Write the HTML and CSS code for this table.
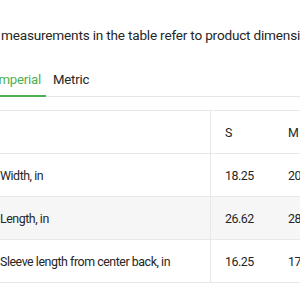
FILE: index.html
```html
<!DOCTYPE html>
<html lang="en">
<head>
<meta charset="utf-8">
<title>Size chart</title>
<link rel="stylesheet" href="styles.css">
</head>
<body>
<div class="page">
  <p class="intro">All measurements in the table refer to product dimensions.</p>
  <div class="tabs">
    <div class="tab active">Imperial</div>
    <div class="tab">Metric</div>
  </div>
  <table class="sizes">
    <thead>
      <tr><th class="label"></th><th>S</th><th>M</th><th>L</th><th>XL</th></tr>
    </thead>
    <tbody>
      <tr><td class="label">Width, in</td><td>18.25</td><td>20.25</td><td>22.25</td><td>24.25</td></tr>
      <tr class="alt"><td class="label">Length, in</td><td>26.62</td><td>28.12</td><td>29.62</td><td>31.12</td></tr>
      <tr><td class="label">Sleeve length from center back, in</td><td>16.25</td><td>17.50</td><td>18.75</td><td>20.00</td></tr>
    </tbody>
  </table>
</div>
</body>
</html>
```
FILE: styles.css
```css
html, body {
  margin: 0;
  padding: 0;
  overflow: hidden;
  background: #fff;
}
body {
  font-family: Roboto, "Liberation Sans", sans-serif;
  color: #262626;
}
.page {
  margin-left: -24px;
  width: 700px;
  padding-top: 25px;
}
.intro {
  margin: 0;
  padding-left: 7px;
  line-height: 20px;
  font-size: 13.6px;
  letter-spacing: -0.2px;
}
.tabs {
  display: flex;
  gap: 2px;
  margin-top: 19px;
  padding-left: 14px;
  border-bottom: 1px solid #e6e6e6;
}
.tab {
  padding: 1px 5px 0;
  line-height: 30px;
  font-size: 13.2px;
  letter-spacing: -0.2px;
  color: #262626;
  border-bottom: 2px solid transparent;
  margin-bottom: -1px;
}
.tab.active {
  color: #4caf50;
  border-bottom-color: #4caf50;
}
.sizes {
  margin-top: 13px;
  border-collapse: collapse;
  font-size: 12.4px;
  letter-spacing: -0.45px;
}
.sizes th, .sizes td {
  height: 42px;
  padding: 0 12px 0 14px;
  text-align: left;
  font-weight: normal;
  border-top: 1px solid #e8e8e8;
  border-bottom: 1px solid #e8e8e8;
  white-space: nowrap;
  width: 37px;
}
.sizes .label {
  width: 198px;
  padding-left: 24px;
  border-right: 1px solid #e8e8e8;
}
.sizes tr.alt td {
  background: #f6f6f6;
}
```
